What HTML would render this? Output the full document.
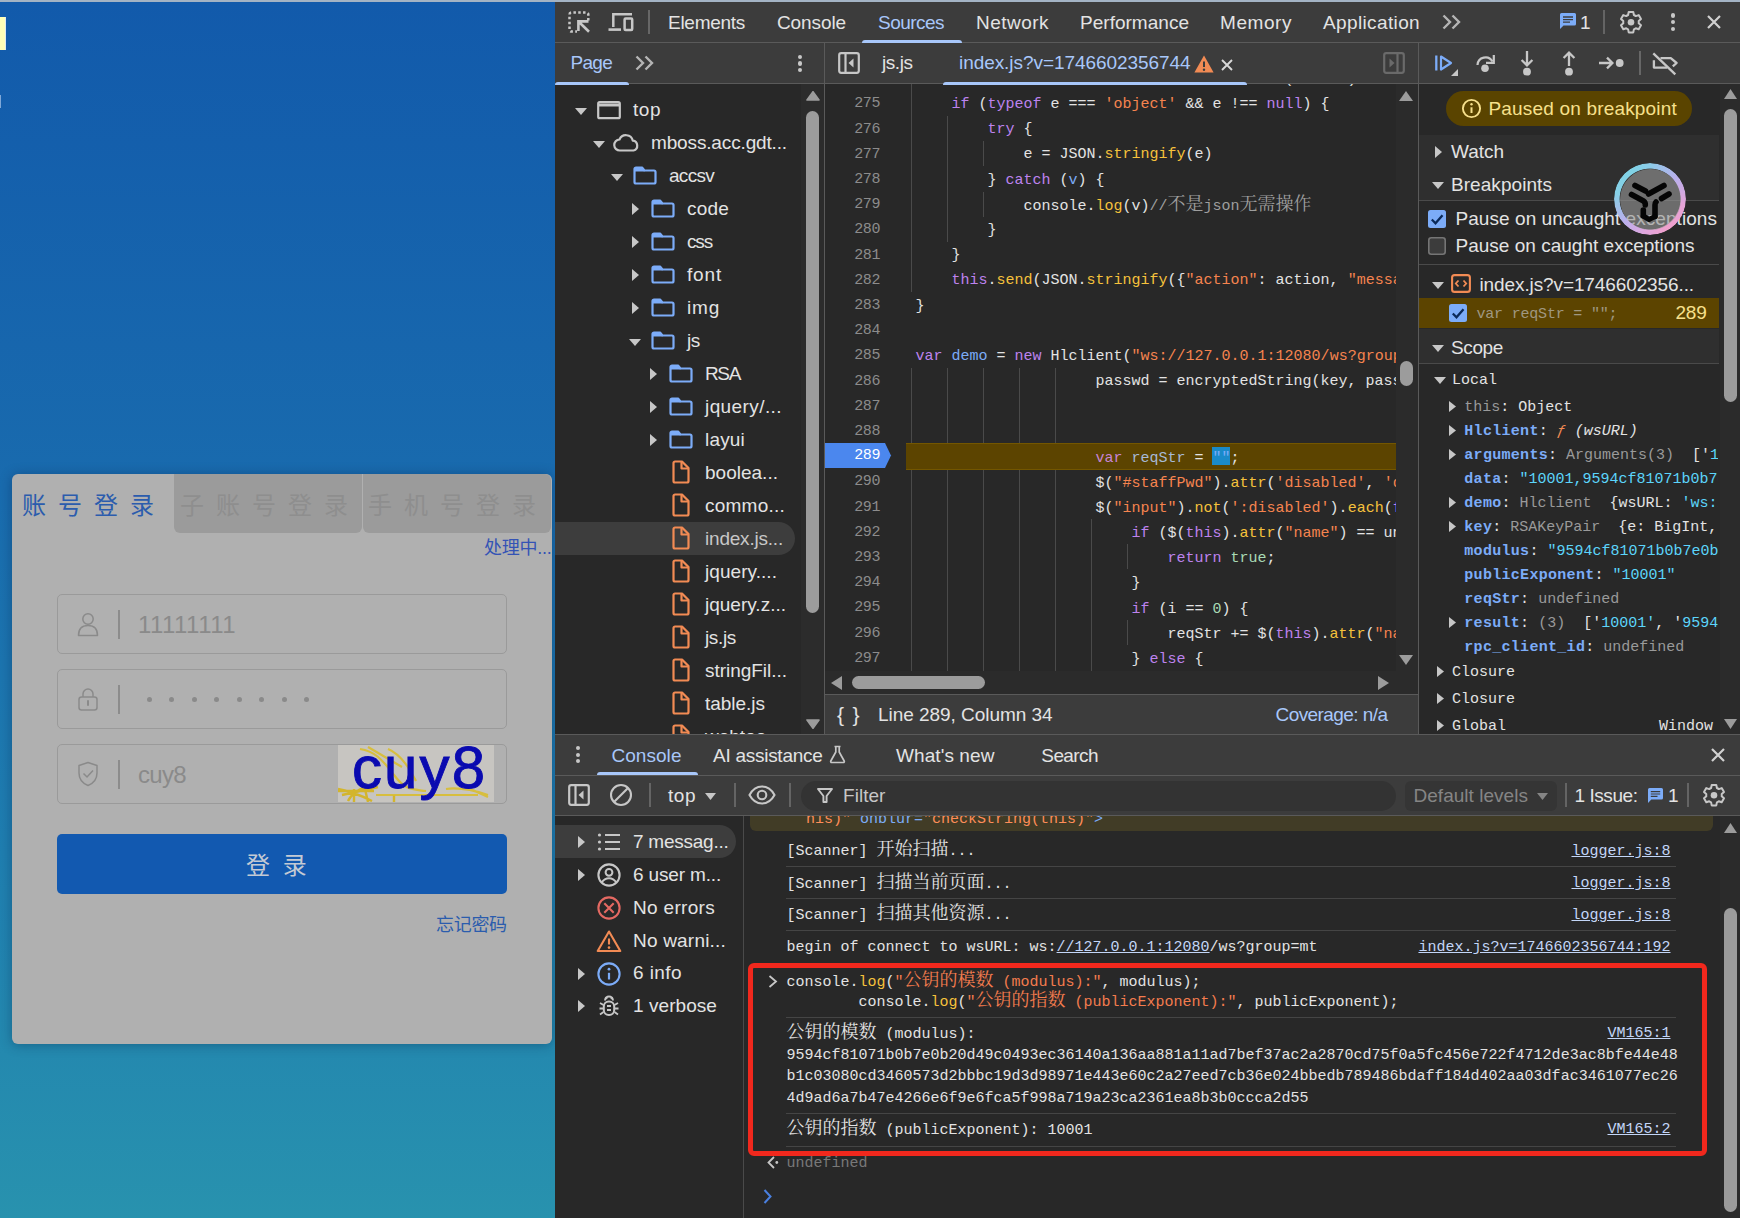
<!DOCTYPE html>
<html lang="zh-CN"><head><meta charset="utf-8"><title>DevTools</title><style>
html,body{margin:0;padding:0;}
body{width:1740px;height:1218px;overflow:hidden;position:relative;background:#282828;font-family:"Liberation Sans","Noto Sans CJK SC",sans-serif;}
#r{position:absolute;left:0;top:0;width:1740px;height:1218px;overflow:hidden;}
#r div,#r span,#r svg{position:absolute;}
#r span{white-space:pre;}
#r span span{position:static;}
.m{font-family:"Liberation Mono","Noto Serif CJK SC",monospace;}
.c{font-family:"Liberation Mono","Noto Serif CJK SC",monospace;font-size:18px;}
</style></head><body><div id="r">
<div style="left:0px;top:0px;width:555px;height:1218px;background:linear-gradient(to bottom,#125aab 0%,#196bae 40%,#1f7eb0 70%,#2892ae 100%);"></div>
<div style="left:0px;top:17px;width:5px;height:33px;background:#ffffb8;box-shadow:1px 0 0 #dfe8f0;"></div>
<div style="left:0px;top:95px;width:1px;height:13px;background:#7fa8d8;"></div>
<div style="left:12px;top:474px;width:539.5px;height:569.5px;background:#b0b0b0;border-radius:6px;box-shadow:0 1px 12px rgba(0,25,60,.35);"></div>
<div style="left:174px;top:474px;width:188px;height:59px;background:#9b9b9b;border-radius:0 0 6px 6px;"></div>
<div style="left:363px;top:474px;width:188px;height:59px;background:#9b9b9b;border-radius:0 6px 6px 6px;"></div>
<span style="left:22px;top:488.18px;font-size:24px;line-height:36px;color:#2b5cad;font-family:'Liberation Sans','Noto Sans CJK SC',sans-serif;letter-spacing:12px;">账号登录</span>
<span style="left:180px;top:488.18px;font-size:24px;line-height:36px;color:#8e8e8e;font-family:'Liberation Sans','Noto Sans CJK SC',sans-serif;letter-spacing:12px;">子账号登录</span>
<span style="left:368px;top:488.18px;font-size:24px;line-height:36px;color:#8e8e8e;font-family:'Liberation Sans','Noto Sans CJK SC',sans-serif;letter-spacing:12px;">手机号登录</span>
<span style="left:484px;top:535.26px;font-size:18px;line-height:27px;color:#3453b5;font-family:'Liberation Sans','Noto Sans CJK SC',sans-serif;letter-spacing:-0.253px;">处理中...</span>
<div style="left:57px;top:594px;width:448px;height:58px;background:transparent;border:1px solid #9a9a9a;border-radius:5px;"></div>
<div style="left:118px;top:610px;width:2px;height:29px;background:#8c8c8c;"></div>
<div style="left:57px;top:669px;width:448px;height:58px;background:transparent;border:1px solid #9a9a9a;border-radius:5px;"></div>
<div style="left:118px;top:685px;width:2px;height:29px;background:#8c8c8c;"></div>
<div style="left:57px;top:744px;width:448px;height:58px;background:transparent;border:1px solid #9a9a9a;border-radius:5px;"></div>
<div style="left:118px;top:760px;width:2px;height:29px;background:#8c8c8c;"></div>
<svg style="left:76px;top:611px;" width="24" height="26" viewBox="0 0 24 26"><circle cx="12" cy="8" r="5.2" fill="none" stroke="#8a8a8a" stroke-width="1.5"/><path d="M2.5 24.5 C2.5 17 7 14.5 12 14.5 C17 14.5 21.5 17 21.5 24.5 Z" fill="none" stroke="#8a8a8a" stroke-width="1.5" stroke-linejoin="round"/></svg>
<svg style="left:77px;top:686px;" width="22" height="26" viewBox="0 0 22 26"><path d="M6 11 V8 a5 5 0 0 1 10 0 V11" fill="none" stroke="#8a8a8a" stroke-width="1.5"/><rect x="2" y="11" width="18" height="13" rx="2.5" fill="none" stroke="#8a8a8a" stroke-width="1.5"/><path d="M11 15 v4" stroke="#8a8a8a" stroke-width="2" stroke-linecap="round"/></svg>
<svg style="left:77px;top:761px;" width="22" height="26" viewBox="0 0 22 26"><path d="M11 1.5 L20 4.5 V12 C20 18 16 22.5 11 24.5 C6 22.5 2 18 2 12 V4.5 Z" fill="none" stroke="#8a8a8a" stroke-width="1.5" stroke-linejoin="round"/><path d="M6.5 12.5 L10 16 L16 9.5" fill="none" stroke="#8a8a8a" stroke-width="1.5"/></svg>
<span style="left:138px;top:606.68px;font-size:24px;line-height:36px;color:#8a8a8a;font-family:'Liberation Sans','Noto Sans CJK SC',sans-serif;letter-spacing:0.461px;">11111111</span>
<div style="left:146.8px;top:697.2px;width:5px;height:5px;border-radius:3px;background:#8a8a8a"></div>
<div style="left:169.3px;top:697.2px;width:5px;height:5px;border-radius:3px;background:#8a8a8a"></div>
<div style="left:191.8px;top:697.2px;width:5px;height:5px;border-radius:3px;background:#8a8a8a"></div>
<div style="left:214.3px;top:697.2px;width:5px;height:5px;border-radius:3px;background:#8a8a8a"></div>
<div style="left:236.8px;top:697.2px;width:5px;height:5px;border-radius:3px;background:#8a8a8a"></div>
<div style="left:259.3px;top:697.2px;width:5px;height:5px;border-radius:3px;background:#8a8a8a"></div>
<div style="left:281.8px;top:697.2px;width:5px;height:5px;border-radius:3px;background:#8a8a8a"></div>
<div style="left:304.3px;top:697.2px;width:5px;height:5px;border-radius:3px;background:#8a8a8a"></div>
<span style="left:138px;top:757.18px;font-size:24px;line-height:36px;color:#8a8a8a;font-family:'Liberation Sans','Noto Sans CJK SC',sans-serif;letter-spacing:-0.676px;">cuy8</span>
<svg style="left:338px;top:745px" width="156" height="57" viewBox="0 0 156 57"><rect width="156" height="57" fill="#c7c5c1"/><path d="M0 44 C12 46 22 50 34 56 M4 50 L40 42 M10 56 C14 48 22 44 30 40 M0 46 H36 M16 57 V44 M30 57 L26 40 M56 57 V50" stroke="#d4b21c" stroke-width="2.4" fill="none" opacity=".9"/><path d="M22 4 C36 6 44 14 56 30 S74 44 88 46 M30 2 L64 22 M50 4 C60 8 70 20 78 36 M38 50 H140 M108 44 C122 42 138 46 150 50 M128 42 L150 52" stroke="#d8bc30" stroke-width="2.2" fill="none" opacity=".9"/><text x="14" y="42.5" font-family="Liberation Sans,sans-serif" font-size="60" fill="#0a0ab0" stroke="#0a0ab0" stroke-width="0.9" textLength="133" lengthAdjust="spacing">cuy8</text></svg>
<div style="left:57px;top:834px;width:450px;height:60px;background:#1259b0;border-radius:5px;"></div>
<span style="left:246px;top:847.68px;font-size:24px;line-height:36px;color:#c4cad4;font-family:'Liberation Sans','Noto Sans CJK SC',sans-serif;letter-spacing:3px;">登 录</span>
<span style="left:436px;top:912.26px;font-size:18px;line-height:27px;color:#2b5cad;font-family:'Liberation Sans','Noto Sans CJK SC',sans-serif;letter-spacing:-0.3px;">忘记密码</span>
<div style="left:555px;top:0px;width:1185px;height:1218px;background:#282828;"></div>
<div style="left:0px;top:0px;width:1740px;height:2px;background:#a3b3c4;"></div>
<div style="left:555px;top:2px;width:1185px;height:40px;background:#3c3c3c;"></div>
<div style="left:555px;top:42px;width:1185px;height:1px;background:#5a5a5a;"></div>
<div style="left:555px;top:43px;width:1185px;height:40px;background:#3c3c3c;"></div>
<div style="left:555px;top:83px;width:1185px;height:1px;background:#5a5a5a;"></div>
<svg style="left:567px;top:10px;" width="24" height="24" viewBox="0 0 24 24"><path d="M21.3 10.5 V4.5 a2 2 0 0 0 -2 -2 H4.5 a2 2 0 0 0 -2 2 V19.5 a2 2 0 0 0 2 2 H10" fill="none" stroke="#c7c7c7" stroke-width="2.5" stroke-dasharray="2.5 2.3"/><path d="M11.5 11.5 L22 21.8 M11.4 21 V11.4 H21.5" fill="none" stroke="#c7c7c7" stroke-width="2.6"/></svg>
<svg style="left:607px;top:11px;" width="28" height="22" viewBox="0 0 28 22"><path d="M6.3 16 V3.3 H25" fill="none" stroke="#c7c7c7" stroke-width="2.5"/><path d="M1.5 18.6 H14" stroke="#c7c7c7" stroke-width="2.6"/><rect x="17.6" y="7.6" width="7.6" height="11.4" rx="1" fill="none" stroke="#c7c7c7" stroke-width="2.5"/></svg>
<div style="left:648px;top:10px;width:2px;height:24px;background:#676767;"></div>
<span style="left:668px;top:8.92px;font-size:19px;line-height:28px;color:#e3e3e3;letter-spacing:-0.275px;">Elements</span>
<span style="left:777px;top:8.92px;font-size:19px;line-height:28px;color:#e3e3e3;letter-spacing:-0.103px;">Console</span>
<span style="left:878px;top:8.92px;font-size:19px;line-height:28px;color:#a8c7fa;letter-spacing:-0.529px;">Sources</span>
<span style="left:976px;top:8.92px;font-size:19px;line-height:28px;color:#e3e3e3;letter-spacing:0.473px;">Network</span>
<span style="left:1080px;top:8.92px;font-size:19px;line-height:28px;color:#e3e3e3;letter-spacing:0.02px;">Performance</span>
<span style="left:1220px;top:8.92px;font-size:19px;line-height:28px;color:#e3e3e3;letter-spacing:0.562px;">Memory</span>
<span style="left:1323px;top:8.92px;font-size:19px;line-height:28px;color:#e3e3e3;letter-spacing:0.368px;">Application</span>
<div style="left:862px;top:39.5px;width:100px;height:3px;background:#a8c7fa;border-radius:3px 3px 0 0;"></div>
<svg style="left:1442px;top:14px;" width="19" height="16" viewBox="0 0 19 16"><path d="M1.5 1.5 L8 8 L1.5 14.5 M10.5 1.5 L17 8 L10.5 14.5" fill="none" stroke="#b4b4b4" stroke-width="2.4"/></svg>
<svg style="left:1560px;top:13px;" width="16" height="16" viewBox="0 0 16 16"><path d="M0 1.5 a1.5 1.5 0 0 1 1.5 -1.5 H14.5 a1.5 1.5 0 0 1 1.5 1.5 V11 a1.5 1.5 0 0 1 -1.5 1.5 H3.5 L0 16 Z" fill="#7cacf8"/><path d="M3 4 H13 M3 6.6 H13 M3 9.2 H10" stroke="#3c3c3c" stroke-width="1.3"/></svg>
<span style="left:1580px;top:8.72px;font-size:19px;line-height:28px;color:#e3e3e3;">1</span>
<div style="left:1602.5px;top:10px;width:2px;height:24px;background:#646464;"></div>
<svg style="left:1619px;top:10px;" width="24" height="24" viewBox="0 0 24 24"><path fill="none" stroke="#c7c7c7" stroke-width="2" stroke-linejoin="round" d="M9.7 2 h4.6 l.6 3 a7.5 7.5 0 0 1 1.9 1.1 l2.9 -1 2.3 4 -2.3 2 a7.5 7.5 0 0 1 0 2.2 l2.3 2 -2.3 4 -2.9 -1 a7.5 7.5 0 0 1 -1.9 1.1 l-.6 3 h-4.6 l-.6 -3 a7.5 7.5 0 0 1 -1.9 -1.1 l-2.9 1 -2.3 -4 2.3 -2 a7.5 7.5 0 0 1 0 -2.2 l-2.3 -2 2.3 -4 2.9 1 a7.5 7.5 0 0 1 1.9 -1.1 z"/><circle cx="12" cy="12.2" r="3.3" fill="#c7c7c7"/></svg>
<div style="left:1670.8px;top:13.4px;width:4.4px;height:4.4px;border-radius:50%;background:#c7c7c7"></div>
<div style="left:1670.8px;top:20.1px;width:4.4px;height:4.4px;border-radius:50%;background:#c7c7c7"></div>
<div style="left:1670.8px;top:26.8px;width:4.4px;height:4.4px;border-radius:50%;background:#c7c7c7"></div>
<svg style="left:1707px;top:15px;" width="14" height="14" viewBox="0 0 14 14"><path d="M1 1 L13 13 M13 1 L1 13" stroke="#d0d0d0" stroke-width="2.2"/></svg>
<span style="left:570.5px;top:49.42px;font-size:19px;line-height:28px;color:#a8c7fa;letter-spacing:-0.719px;">Page</span>
<div style="left:555px;top:81.5px;width:74px;height:3px;background:#a8c7fa;border-radius:3px 3px 0 0;"></div>
<svg style="left:635px;top:55px;" width="19" height="16" viewBox="0 0 19 16"><path d="M1.5 1.5 L8 8 L1.5 14.5 M10.5 1.5 L17 8 L10.5 14.5" fill="none" stroke="#b4b4b4" stroke-width="2.4"/></svg>
<div style="left:797.9px;top:54.9px;width:4.2px;height:4.2px;border-radius:50%;background:#c7c7c7"></div>
<div style="left:797.9px;top:61.4px;width:4.2px;height:4.2px;border-radius:50%;background:#c7c7c7"></div>
<div style="left:797.9px;top:67.9px;width:4.2px;height:4.2px;border-radius:50%;background:#c7c7c7"></div>
<div style="left:824px;top:43px;width:1px;height:691px;background:#5a5a5a;"></div>
<svg style="left:838px;top:52px;" width="22" height="22" viewBox="0 0 22 22"><rect x="1.2" y="1.2" width="19.6" height="19.6" rx="2" fill="none" stroke="#c7c7c7" stroke-width="2.2"/><path d="M7.5 1 V21" stroke="#c7c7c7" stroke-width="2.2"/><path d="M15.5 6.5 L10.5 11 L15.5 15.5 Z" fill="#c7c7c7"/></svg>
<span style="left:882px;top:49.42px;font-size:19px;line-height:28px;color:#e3e3e3;letter-spacing:-0.447px;">js.js</span>
<span style="left:959px;top:49.42px;font-size:19px;line-height:28px;color:#a8c7fa;letter-spacing:-0.061px;">index.js?v=1746602356744</span>
<svg style="left:1194px;top:55px;" width="20" height="18" viewBox="0 0 20 18"><path d="M10 0.5 L19.6 17.5 H0.4 Z" fill="#f28b54"/><path d="M10 6.5 V12" stroke="#3c3c3c" stroke-width="2"/><circle cx="10" cy="14.7" r="1.2" fill="#3c3c3c"/></svg>
<svg style="left:1220.5px;top:58.5px;" width="12" height="12" viewBox="0 0 12 12"><path d="M1 1 L11 11 M11 1 L1 11" stroke="#d8d8d8" stroke-width="1.9"/></svg>
<div style="left:943px;top:81.5px;width:304px;height:3px;background:#a8c7fa;border-radius:3px 3px 0 0;"></div>
<svg style="left:1383px;top:52px;" width="22" height="22" viewBox="0 0 22 22"><rect x="1.2" y="1.2" width="19.6" height="19.6" rx="2" fill="none" stroke="#6a6a6a" stroke-width="2.2"/><path d="M14.5 1 V21" stroke="#6a6a6a" stroke-width="2.2"/><path d="M6.5 6.5 L11.5 11 L6.5 15.5 Z" fill="#6a6a6a"/></svg>
<div style="left:1418px;top:43px;width:1px;height:691px;background:#5a5a5a;"></div>
<svg style="left:1434px;top:54px;" width="26" height="24" viewBox="0 0 26 24"><path d="M2.3 1.5 V16.5" stroke="#7cacf8" stroke-width="2.3"/><path d="M7 2.5 L17 9 L7 15.5 Z" fill="none" stroke="#7cacf8" stroke-width="2.2" stroke-linejoin="round"/><path d="M24 15 V22 H17 Z" fill="#c7c7c7"/></svg>
<svg style="left:1475px;top:53px;" width="22" height="22" viewBox="0 0 22 22"><path d="M2.5 12 A8 8 0 0 1 17.5 8.5" fill="none" stroke="#c7c7c7" stroke-width="2.2"/><path d="M18.8 2 V9.8 H11" fill="none" stroke="#c7c7c7" stroke-width="2.2"/><circle cx="10" cy="15.3" r="3.8" fill="#c7c7c7"/></svg>
<svg style="left:1517px;top:50px;" width="20" height="27" viewBox="0 0 20 27"><path d="M10 1 V15 M4.6 10 L10 15.4 L15.4 10" fill="none" stroke="#c7c7c7" stroke-width="2.3"/><circle cx="10" cy="21.7" r="3.9" fill="#c7c7c7"/></svg>
<svg style="left:1559px;top:50px;" width="20" height="27" viewBox="0 0 20 27"><path d="M10 16 V2.6 M4.6 8 L10 2.6 L15.4 8" fill="none" stroke="#c7c7c7" stroke-width="2.3"/><circle cx="10" cy="21.7" r="3.9" fill="#c7c7c7"/></svg>
<svg style="left:1598px;top:54px;" width="28" height="18" viewBox="0 0 28 18"><path d="M1 9 H14 M9 3.6 L14.4 9 L9 14.4" fill="none" stroke="#c7c7c7" stroke-width="2.3"/><circle cx="21.7" cy="9" r="3.9" fill="#c7c7c7"/></svg>
<div style="left:1638.5px;top:51px;width:2px;height:24px;background:#676767;"></div>
<svg style="left:1651px;top:51px;" width="28" height="25" viewBox="0 0 28 25"><path d="M9.5 7.2 H19.8 L25.6 12 L21.8 15.4 M16.2 16.6 H2.9 V9.2" fill="none" stroke="#c7c7c7" stroke-width="2.3" stroke-linejoin="round"/><path d="M2.3 2.3 L24.3 23.3" stroke="#c7c7c7" stroke-width="2.3"/></svg>
<div style="left:555px;top:522px;width:240px;height:33px;background:#3d3d3d;border-radius:0 17px 17px 0;"></div>
<svg style="left:575px;top:108.0px;" width="12" height="7" viewBox="0 0 12 7"><path d="M0 0 H12 L6 7 Z" fill="#c7c7c7"/></svg>
<svg style="left:597px;top:101.0px;" width="24" height="19" viewBox="0 0 24 19"><rect x="1.2" y="1.2" width="21.6" height="16" rx="1.5" fill="none" stroke="#c7c7c7" stroke-width="2.2"/><path d="M1 4 H23" stroke="#c7c7c7" stroke-width="3"/></svg>
<span style="left:633px;top:95.72px;font-size:19px;line-height:28px;color:#e3e3e3;letter-spacing:0.526px;">top</span>
<svg style="left:593px;top:141.0px;" width="12" height="7" viewBox="0 0 12 7"><path d="M0 0 H12 L6 7 Z" fill="#c7c7c7"/></svg>
<svg style="left:613px;top:132.0px;" width="28" height="20" viewBox="0 0 28 20"><path d="M7 18.5 a5.5 5.5 0 0 1 -.5 -11 a7 7 0 0 1 13.3 1.2 a5 5 0 0 1 .7 9.8 Z" fill="none" stroke="#c7c7c7" stroke-width="2.2" stroke-linejoin="round"/></svg>
<span style="left:651px;top:128.72px;font-size:19px;line-height:28px;color:#e3e3e3;letter-spacing:-0.146px;">mboss.acc.gdt...</span>
<svg style="left:611px;top:174.0px;" width="12" height="7" viewBox="0 0 12 7"><path d="M0 0 H12 L6 7 Z" fill="#c7c7c7"/></svg>
<svg style="left:633px;top:166.0px;" width="24" height="19" viewBox="0 0 24 19"><path d="M1.5 3 a1.5 1.5 0 0 1 1.5 -1.5 H9 L11.5 4.5 H21 a1.5 1.5 0 0 1 1.5 1.5 V16 a1.5 1.5 0 0 1 -1.5 1.5 H3 a1.5 1.5 0 0 1 -1.5 -1.5 Z" fill="none" stroke="#7cacf8" stroke-width="2.2" stroke-linejoin="round"/><path d="M1.5 5.5 V2.8 a1.3 1.3 0 0 1 1.3 -1.3 H9 L11.5 4.5 V5.5 Z" fill="#7cacf8"/></svg>
<span style="left:669px;top:161.72px;font-size:19px;line-height:28px;color:#e3e3e3;letter-spacing:-0.716px;">accsv</span>
<svg style="left:632px;top:203.0px;" width="7" height="12" viewBox="0 0 7 12"><path d="M0 0 V12 L7 6 Z" fill="#c7c7c7"/></svg>
<svg style="left:651px;top:199.0px;" width="24" height="19" viewBox="0 0 24 19"><path d="M1.5 3 a1.5 1.5 0 0 1 1.5 -1.5 H9 L11.5 4.5 H21 a1.5 1.5 0 0 1 1.5 1.5 V16 a1.5 1.5 0 0 1 -1.5 1.5 H3 a1.5 1.5 0 0 1 -1.5 -1.5 Z" fill="none" stroke="#7cacf8" stroke-width="2.2" stroke-linejoin="round"/><path d="M1.5 5.5 V2.8 a1.3 1.3 0 0 1 1.3 -1.3 H9 L11.5 4.5 V5.5 Z" fill="#7cacf8"/></svg>
<span style="left:687px;top:194.72px;font-size:19px;line-height:28px;color:#e3e3e3;letter-spacing:0.199px;">code</span>
<svg style="left:632px;top:236.0px;" width="7" height="12" viewBox="0 0 7 12"><path d="M0 0 V12 L7 6 Z" fill="#c7c7c7"/></svg>
<svg style="left:651px;top:232.0px;" width="24" height="19" viewBox="0 0 24 19"><path d="M1.5 3 a1.5 1.5 0 0 1 1.5 -1.5 H9 L11.5 4.5 H21 a1.5 1.5 0 0 1 1.5 1.5 V16 a1.5 1.5 0 0 1 -1.5 1.5 H3 a1.5 1.5 0 0 1 -1.5 -1.5 Z" fill="none" stroke="#7cacf8" stroke-width="2.2" stroke-linejoin="round"/><path d="M1.5 5.5 V2.8 a1.3 1.3 0 0 1 1.3 -1.3 H9 L11.5 4.5 V5.5 Z" fill="#7cacf8"/></svg>
<span style="left:687px;top:227.72px;font-size:19px;line-height:28px;color:#e3e3e3;letter-spacing:-1.167px;">css</span>
<svg style="left:632px;top:269.0px;" width="7" height="12" viewBox="0 0 7 12"><path d="M0 0 V12 L7 6 Z" fill="#c7c7c7"/></svg>
<svg style="left:651px;top:265.0px;" width="24" height="19" viewBox="0 0 24 19"><path d="M1.5 3 a1.5 1.5 0 0 1 1.5 -1.5 H9 L11.5 4.5 H21 a1.5 1.5 0 0 1 1.5 1.5 V16 a1.5 1.5 0 0 1 -1.5 1.5 H3 a1.5 1.5 0 0 1 -1.5 -1.5 Z" fill="none" stroke="#7cacf8" stroke-width="2.2" stroke-linejoin="round"/><path d="M1.5 5.5 V2.8 a1.3 1.3 0 0 1 1.3 -1.3 H9 L11.5 4.5 V5.5 Z" fill="#7cacf8"/></svg>
<span style="left:687px;top:260.72px;font-size:19px;line-height:28px;color:#e3e3e3;letter-spacing:0.824px;">font</span>
<svg style="left:632px;top:302.0px;" width="7" height="12" viewBox="0 0 7 12"><path d="M0 0 V12 L7 6 Z" fill="#c7c7c7"/></svg>
<svg style="left:651px;top:298.0px;" width="24" height="19" viewBox="0 0 24 19"><path d="M1.5 3 a1.5 1.5 0 0 1 1.5 -1.5 H9 L11.5 4.5 H21 a1.5 1.5 0 0 1 1.5 1.5 V16 a1.5 1.5 0 0 1 -1.5 1.5 H3 a1.5 1.5 0 0 1 -1.5 -1.5 Z" fill="none" stroke="#7cacf8" stroke-width="2.2" stroke-linejoin="round"/><path d="M1.5 5.5 V2.8 a1.3 1.3 0 0 1 1.3 -1.3 H9 L11.5 4.5 V5.5 Z" fill="#7cacf8"/></svg>
<span style="left:687px;top:293.72px;font-size:19px;line-height:28px;color:#e3e3e3;letter-spacing:0.792px;">img</span>
<svg style="left:629px;top:339.0px;" width="12" height="7" viewBox="0 0 12 7"><path d="M0 0 H12 L6 7 Z" fill="#c7c7c7"/></svg>
<svg style="left:651px;top:331.0px;" width="24" height="19" viewBox="0 0 24 19"><path d="M1.5 3 a1.5 1.5 0 0 1 1.5 -1.5 H9 L11.5 4.5 H21 a1.5 1.5 0 0 1 1.5 1.5 V16 a1.5 1.5 0 0 1 -1.5 1.5 H3 a1.5 1.5 0 0 1 -1.5 -1.5 Z" fill="none" stroke="#7cacf8" stroke-width="2.2" stroke-linejoin="round"/><path d="M1.5 5.5 V2.8 a1.3 1.3 0 0 1 1.3 -1.3 H9 L11.5 4.5 V5.5 Z" fill="#7cacf8"/></svg>
<span style="left:687px;top:326.72px;font-size:19px;line-height:28px;color:#e3e3e3;letter-spacing:-0.367px;">js</span>
<svg style="left:650px;top:368.0px;" width="7" height="12" viewBox="0 0 7 12"><path d="M0 0 V12 L7 6 Z" fill="#c7c7c7"/></svg>
<svg style="left:669px;top:364.0px;" width="24" height="19" viewBox="0 0 24 19"><path d="M1.5 3 a1.5 1.5 0 0 1 1.5 -1.5 H9 L11.5 4.5 H21 a1.5 1.5 0 0 1 1.5 1.5 V16 a1.5 1.5 0 0 1 -1.5 1.5 H3 a1.5 1.5 0 0 1 -1.5 -1.5 Z" fill="none" stroke="#7cacf8" stroke-width="2.2" stroke-linejoin="round"/><path d="M1.5 5.5 V2.8 a1.3 1.3 0 0 1 1.3 -1.3 H9 L11.5 4.5 V5.5 Z" fill="#7cacf8"/></svg>
<span style="left:705px;top:359.72px;font-size:19px;line-height:28px;color:#e3e3e3;letter-spacing:-1.359px;">RSA</span>
<svg style="left:650px;top:401.0px;" width="7" height="12" viewBox="0 0 7 12"><path d="M0 0 V12 L7 6 Z" fill="#c7c7c7"/></svg>
<svg style="left:669px;top:397.0px;" width="24" height="19" viewBox="0 0 24 19"><path d="M1.5 3 a1.5 1.5 0 0 1 1.5 -1.5 H9 L11.5 4.5 H21 a1.5 1.5 0 0 1 1.5 1.5 V16 a1.5 1.5 0 0 1 -1.5 1.5 H3 a1.5 1.5 0 0 1 -1.5 -1.5 Z" fill="none" stroke="#7cacf8" stroke-width="2.2" stroke-linejoin="round"/><path d="M1.5 5.5 V2.8 a1.3 1.3 0 0 1 1.3 -1.3 H9 L11.5 4.5 V5.5 Z" fill="#7cacf8"/></svg>
<span style="left:705px;top:392.72px;font-size:19px;line-height:28px;color:#e3e3e3;letter-spacing:0.412px;">jquery/...</span>
<svg style="left:650px;top:434.0px;" width="7" height="12" viewBox="0 0 7 12"><path d="M0 0 V12 L7 6 Z" fill="#c7c7c7"/></svg>
<svg style="left:669px;top:430.0px;" width="24" height="19" viewBox="0 0 24 19"><path d="M1.5 3 a1.5 1.5 0 0 1 1.5 -1.5 H9 L11.5 4.5 H21 a1.5 1.5 0 0 1 1.5 1.5 V16 a1.5 1.5 0 0 1 -1.5 1.5 H3 a1.5 1.5 0 0 1 -1.5 -1.5 Z" fill="none" stroke="#7cacf8" stroke-width="2.2" stroke-linejoin="round"/><path d="M1.5 5.5 V2.8 a1.3 1.3 0 0 1 1.3 -1.3 H9 L11.5 4.5 V5.5 Z" fill="#7cacf8"/></svg>
<span style="left:705px;top:425.72px;font-size:19px;line-height:28px;color:#e3e3e3;letter-spacing:0.184px;">layui</span>
<svg style="left:672px;top:460.0px;" width="18" height="24" viewBox="0 0 18 24"><path d="M1.5 3 a1.5 1.5 0 0 1 1.5 -1.5 H10 L16.5 8 V21 a1.5 1.5 0 0 1 -1.5 1.5 H3 a1.5 1.5 0 0 1 -1.5 -1.5 Z" fill="none" stroke="#f28b54" stroke-width="2.2" stroke-linejoin="round"/><path d="M9.5 1.5 V8.5 H16.5" fill="none" stroke="#f28b54" stroke-width="2.2" stroke-linejoin="round"/></svg>
<span style="left:705px;top:458.72px;font-size:19px;line-height:28px;color:#e3e3e3;letter-spacing:0.01px;">boolea...</span>
<svg style="left:672px;top:492.99999999999994px;" width="18" height="24" viewBox="0 0 18 24"><path d="M1.5 3 a1.5 1.5 0 0 1 1.5 -1.5 H10 L16.5 8 V21 a1.5 1.5 0 0 1 -1.5 1.5 H3 a1.5 1.5 0 0 1 -1.5 -1.5 Z" fill="none" stroke="#f28b54" stroke-width="2.2" stroke-linejoin="round"/><path d="M9.5 1.5 V8.5 H16.5" fill="none" stroke="#f28b54" stroke-width="2.2" stroke-linejoin="round"/></svg>
<span style="left:705px;top:491.72px;font-size:19px;line-height:28px;color:#e3e3e3;letter-spacing:0.234px;">commo...</span>
<svg style="left:672px;top:526.0px;" width="18" height="24" viewBox="0 0 18 24"><path d="M1.5 3 a1.5 1.5 0 0 1 1.5 -1.5 H10 L16.5 8 V21 a1.5 1.5 0 0 1 -1.5 1.5 H3 a1.5 1.5 0 0 1 -1.5 -1.5 Z" fill="none" stroke="#f28b54" stroke-width="2.2" stroke-linejoin="round"/><path d="M9.5 1.5 V8.5 H16.5" fill="none" stroke="#f28b54" stroke-width="2.2" stroke-linejoin="round"/></svg>
<span style="left:705px;top:524.72px;font-size:19px;line-height:28px;color:#c7c7c7;letter-spacing:-0.206px;">index.js...</span>
<svg style="left:672px;top:559.0px;" width="18" height="24" viewBox="0 0 18 24"><path d="M1.5 3 a1.5 1.5 0 0 1 1.5 -1.5 H10 L16.5 8 V21 a1.5 1.5 0 0 1 -1.5 1.5 H3 a1.5 1.5 0 0 1 -1.5 -1.5 Z" fill="none" stroke="#f28b54" stroke-width="2.2" stroke-linejoin="round"/><path d="M9.5 1.5 V8.5 H16.5" fill="none" stroke="#f28b54" stroke-width="2.2" stroke-linejoin="round"/></svg>
<span style="left:705px;top:557.72px;font-size:19px;line-height:28px;color:#e3e3e3;letter-spacing:0.053px;">jquery....</span>
<svg style="left:672px;top:592.0px;" width="18" height="24" viewBox="0 0 18 24"><path d="M1.5 3 a1.5 1.5 0 0 1 1.5 -1.5 H10 L16.5 8 V21 a1.5 1.5 0 0 1 -1.5 1.5 H3 a1.5 1.5 0 0 1 -1.5 -1.5 Z" fill="none" stroke="#f28b54" stroke-width="2.2" stroke-linejoin="round"/><path d="M9.5 1.5 V8.5 H16.5" fill="none" stroke="#f28b54" stroke-width="2.2" stroke-linejoin="round"/></svg>
<span style="left:705px;top:590.72px;font-size:19px;line-height:28px;color:#e3e3e3;letter-spacing:0.003px;">jquery.z...</span>
<svg style="left:672px;top:625.0px;" width="18" height="24" viewBox="0 0 18 24"><path d="M1.5 3 a1.5 1.5 0 0 1 1.5 -1.5 H10 L16.5 8 V21 a1.5 1.5 0 0 1 -1.5 1.5 H3 a1.5 1.5 0 0 1 -1.5 -1.5 Z" fill="none" stroke="#f28b54" stroke-width="2.2" stroke-linejoin="round"/><path d="M9.5 1.5 V8.5 H16.5" fill="none" stroke="#f28b54" stroke-width="2.2" stroke-linejoin="round"/></svg>
<span style="left:705px;top:623.72px;font-size:19px;line-height:28px;color:#e3e3e3;letter-spacing:-0.347px;">js.js</span>
<svg style="left:672px;top:658.0px;" width="18" height="24" viewBox="0 0 18 24"><path d="M1.5 3 a1.5 1.5 0 0 1 1.5 -1.5 H10 L16.5 8 V21 a1.5 1.5 0 0 1 -1.5 1.5 H3 a1.5 1.5 0 0 1 -1.5 -1.5 Z" fill="none" stroke="#f28b54" stroke-width="2.2" stroke-linejoin="round"/><path d="M9.5 1.5 V8.5 H16.5" fill="none" stroke="#f28b54" stroke-width="2.2" stroke-linejoin="round"/></svg>
<span style="left:705px;top:656.72px;font-size:19px;line-height:28px;color:#e3e3e3;letter-spacing:-0.03px;">stringFil...</span>
<svg style="left:672px;top:691.0px;" width="18" height="24" viewBox="0 0 18 24"><path d="M1.5 3 a1.5 1.5 0 0 1 1.5 -1.5 H10 L16.5 8 V21 a1.5 1.5 0 0 1 -1.5 1.5 H3 a1.5 1.5 0 0 1 -1.5 -1.5 Z" fill="none" stroke="#f28b54" stroke-width="2.2" stroke-linejoin="round"/><path d="M9.5 1.5 V8.5 H16.5" fill="none" stroke="#f28b54" stroke-width="2.2" stroke-linejoin="round"/></svg>
<span style="left:705px;top:689.72px;font-size:19px;line-height:28px;color:#e3e3e3;letter-spacing:-0.025px;">table.js</span>
<svg style="left:672px;top:724.0px;" width="18" height="24" viewBox="0 0 18 24"><path d="M1.5 3 a1.5 1.5 0 0 1 1.5 -1.5 H10 L16.5 8 V21 a1.5 1.5 0 0 1 -1.5 1.5 H3 a1.5 1.5 0 0 1 -1.5 -1.5 Z" fill="none" stroke="#f28b54" stroke-width="2.2" stroke-linejoin="round"/><path d="M9.5 1.5 V8.5 H16.5" fill="none" stroke="#f28b54" stroke-width="2.2" stroke-linejoin="round"/></svg>
<span style="left:705px;top:722.72px;font-size:19px;line-height:28px;color:#e3e3e3;">webtoo</span>
<div style="left:555px;top:734px;width:269px;height:2px;background:#282828;"></div>
<div style="left:801px;top:84px;width:23px;height:650px;background:#2c2c2c;"></div>
<svg style="left:805.5px;top:91px;" width="14" height="10" viewBox="0 0 14 10"><path d="M1 9 H13 L7 0.7 Z" fill="#9c9c9c" stroke="#9c9c9c" stroke-width="1.6" stroke-linejoin="round"/></svg>
<svg style="left:805.5px;top:719px;" width="14" height="10" viewBox="0 0 14 10"><path d="M1 1 H13 L7 9.3 Z" fill="#9c9c9c" stroke="#9c9c9c" stroke-width="1.6" stroke-linejoin="round"/></svg>
<div style="left:806px;top:111px;width:13px;height:502px;background:#9c9c9c;border-radius:7px;"></div>
<div style="left:825px;top:84px;width:571px;height:587px;overflow:hidden;">
<div style="left:86px;top:0.0px;width:1px;height:208.3px;background:#4a4a4a"></div>
<div style="left:122px;top:31.9px;width:1px;height:126.0px;background:#4a4a4a"></div>
<div style="left:158px;top:57.1px;width:1px;height:25.2px;background:#4a4a4a"></div>
<div style="left:158px;top:107.5px;width:1px;height:25.2px;background:#4a4a4a"></div>
<div style="left:86px;top:283.9px;width:1px;height:303.1px;background:#4a4a4a"></div>
<div style="left:122px;top:283.9px;width:1px;height:303.1px;background:#4a4a4a"></div>
<div style="left:158px;top:283.9px;width:1px;height:303.1px;background:#4a4a4a"></div>
<div style="left:194px;top:283.9px;width:1px;height:303.1px;background:#4a4a4a"></div>
<div style="left:230px;top:283.9px;width:1px;height:303.1px;background:#4a4a4a"></div>
<div style="left:266px;top:435.1px;width:1px;height:151.9px;background:#4a4a4a"></div>
<div style="left:302px;top:460.3px;width:1px;height:25.2px;background:#4a4a4a"></div>
<div style="left:302px;top:535.9px;width:1px;height:25.2px;background:#4a4a4a"></div>
<div style="left:81px;top:358.6px;width:490px;height:27.4px;background:#5c4400;border-top:1px solid #735600;border-bottom:1px solid #735600;box-sizing:border-box"></div>
<div style="left:387px;top:363px;width:18px;height:17.5px;background:#1a8ac9"></div>
<svg style="left:0;top:358.6px" width="67" height="25" viewBox="0 0 67 25"><path d="M0 0 H60 L66 12.5 L60 25 H0 Z" fill="#4b87ee"/></svg>
<span class="m" style="right:516px;top:-15.89px;font-size:15px;line-height:22px;color:#8c8c8c;letter-spacing:-0.4px">274</span>
<span class="m" style="left:459.5px;top:-15.19px;font-size:15px;line-height:22px;color:#e3e3e3"><span style="color:#e3e3e3">(      )</span></span>
<span class="m" style="right:516px;top:9.31px;font-size:15px;line-height:22px;color:#8c8c8c;letter-spacing:-0.4px">275</span>
<span class="m" style="left:126.5px;top:10.01px;font-size:15px;line-height:22px;color:#e3e3e3"><span style="color:#bd83ee">if</span><span style="color:#e3e3e3"> (</span><span style="color:#bd83ee">typeof</span><span style="color:#e3e3e3"> e === </span><span style="color:#f6844f">'object'</span><span style="color:#e3e3e3"> &amp;&amp; e !== </span><span style="color:#bd83ee">null</span><span style="color:#e3e3e3">) {</span></span>
<span class="m" style="right:516px;top:34.51px;font-size:15px;line-height:22px;color:#8c8c8c;letter-spacing:-0.4px">276</span>
<span class="m" style="left:162.5px;top:35.21px;font-size:15px;line-height:22px;color:#e3e3e3"><span style="color:#bd83ee">try</span><span style="color:#e3e3e3"> {</span></span>
<span class="m" style="right:516px;top:59.71px;font-size:15px;line-height:22px;color:#8c8c8c;letter-spacing:-0.4px">277</span>
<span class="m" style="left:198.5px;top:60.41px;font-size:15px;line-height:22px;color:#e3e3e3"><span style="color:#e3e3e3">e = JSON.</span><span style="color:#f6c23c">stringify</span><span style="color:#e3e3e3">(e)</span></span>
<span class="m" style="right:516px;top:84.91px;font-size:15px;line-height:22px;color:#8c8c8c;letter-spacing:-0.4px">278</span>
<span class="m" style="left:162.5px;top:85.61px;font-size:15px;line-height:22px;color:#e3e3e3"><span style="color:#e3e3e3">} </span><span style="color:#bd83ee">catch</span><span style="color:#e3e3e3"> (</span><span style="color:#7cacf8">v</span><span style="color:#e3e3e3">) {</span></span>
<span class="m" style="right:516px;top:110.11px;font-size:15px;line-height:22px;color:#8c8c8c;letter-spacing:-0.4px">279</span>
<span class="m" style="left:198.5px;top:110.01px;font-size:15px;line-height:22px;color:#e3e3e3"><span style="color:#e3e3e3">console.</span><span style="color:#f6c23c">log</span><span style="color:#e3e3e3">(v)</span><span style="color:#9e9e9e">//<span class="c">不是</span>json<span class="c">无需操作</span></span></span>
<span class="m" style="right:516px;top:135.31px;font-size:15px;line-height:22px;color:#8c8c8c;letter-spacing:-0.4px">280</span>
<span class="m" style="left:162.5px;top:136.01px;font-size:15px;line-height:22px;color:#e3e3e3"><span style="color:#e3e3e3">}</span></span>
<span class="m" style="right:516px;top:160.51px;font-size:15px;line-height:22px;color:#8c8c8c;letter-spacing:-0.4px">281</span>
<span class="m" style="left:126.5px;top:161.21px;font-size:15px;line-height:22px;color:#e3e3e3"><span style="color:#e3e3e3">}</span></span>
<span class="m" style="right:516px;top:185.71px;font-size:15px;line-height:22px;color:#8c8c8c;letter-spacing:-0.4px">282</span>
<span class="m" style="left:126.5px;top:186.41px;font-size:15px;line-height:22px;color:#e3e3e3"><span style="color:#bd83ee">this</span><span style="color:#e3e3e3">.</span><span style="color:#f6c23c">send</span><span style="color:#e3e3e3">(JSON.</span><span style="color:#f6c23c">stringify</span><span style="color:#e3e3e3">({</span><span style="color:#f6844f">"action"</span><span style="color:#e3e3e3">: action, </span><span style="color:#f6844f">"message": e</span></span>
<span class="m" style="right:516px;top:210.91px;font-size:15px;line-height:22px;color:#8c8c8c;letter-spacing:-0.4px">283</span>
<span class="m" style="left:90.5px;top:211.61px;font-size:15px;line-height:22px;color:#e3e3e3"><span style="color:#e3e3e3">}</span></span>
<span class="m" style="right:516px;top:236.11px;font-size:15px;line-height:22px;color:#8c8c8c;letter-spacing:-0.4px">284</span>
<span class="m" style="right:516px;top:261.31px;font-size:15px;line-height:22px;color:#8c8c8c;letter-spacing:-0.4px">285</span>
<span class="m" style="left:90.5px;top:262.01px;font-size:15px;line-height:22px;color:#e3e3e3"><span style="color:#bd83ee">var</span><span style="color:#e3e3e3"> </span><span style="color:#7cacf8">demo</span><span style="color:#e3e3e3"> = </span><span style="color:#bd83ee">new</span><span style="color:#e3e3e3"> Hlclient(</span><span style="color:#f6844f">"ws://127.0.0.1:12080/ws?group=mt"</span></span>
<span class="m" style="right:516px;top:286.51px;font-size:15px;line-height:22px;color:#8c8c8c;letter-spacing:-0.4px">286</span>
<span class="m" style="left:270.5px;top:287.21px;font-size:15px;line-height:22px;color:#e3e3e3"><span style="color:#e3e3e3">passwd = encryptedString(key, passwd)</span></span>
<span class="m" style="right:516px;top:311.71px;font-size:15px;line-height:22px;color:#8c8c8c;letter-spacing:-0.4px">287</span>
<span class="m" style="right:516px;top:336.91px;font-size:15px;line-height:22px;color:#8c8c8c;letter-spacing:-0.4px">288</span>
<span class="m" style="right:516px;top:360.61px;font-size:15px;line-height:22px;color:#ffffff;letter-spacing:-0.4px">289</span>
<span class="m" style="left:270.5px;top:363.61px;font-size:15px;line-height:22px;color:#e3e3e3"><span style="color:#c685d6">var</span><span style="color:#a7bad6"> reqStr</span><span style="color:#e3e3e3"> = </span><span style="color:#7cacf8">""</span><span style="color:#e3e3e3">;</span></span>
<span class="m" style="right:516px;top:387.31px;font-size:15px;line-height:22px;color:#8c8c8c;letter-spacing:-0.4px">290</span>
<span class="m" style="left:270.5px;top:388.61px;font-size:15px;line-height:22px;color:#e3e3e3"><span style="color:#e3e3e3">$(</span><span style="color:#f6844f">"#staffPwd"</span><span style="color:#e3e3e3">).</span><span style="color:#f6c23c">attr</span><span style="color:#e3e3e3">(</span><span style="color:#f6844f">'disabled'</span><span style="color:#e3e3e3">, </span><span style="color:#f6844f">'disabled'</span></span>
<span class="m" style="right:516px;top:412.51px;font-size:15px;line-height:22px;color:#8c8c8c;letter-spacing:-0.4px">291</span>
<span class="m" style="left:270.5px;top:413.81px;font-size:15px;line-height:22px;color:#e3e3e3"><span style="color:#e3e3e3">$(</span><span style="color:#f6844f">"input"</span><span style="color:#e3e3e3">).</span><span style="color:#f6c23c">not</span><span style="color:#e3e3e3">(</span><span style="color:#f6844f">':disabled'</span><span style="color:#e3e3e3">).</span><span style="color:#f6c23c">each</span><span style="color:#e3e3e3">(</span><span style="color:#bd83ee">function</span></span>
<span class="m" style="right:516px;top:437.71px;font-size:15px;line-height:22px;color:#8c8c8c;letter-spacing:-0.4px">292</span>
<span class="m" style="left:306.5px;top:439.01px;font-size:15px;line-height:22px;color:#e3e3e3"><span style="color:#bd83ee">if</span><span style="color:#e3e3e3"> ($(</span><span style="color:#bd83ee">this</span><span style="color:#e3e3e3">).</span><span style="color:#f6c23c">attr</span><span style="color:#e3e3e3">(</span><span style="color:#f6844f">"name"</span><span style="color:#e3e3e3">) == undefined</span></span>
<span class="m" style="right:516px;top:462.91px;font-size:15px;line-height:22px;color:#8c8c8c;letter-spacing:-0.4px">293</span>
<span class="m" style="left:342.5px;top:464.21px;font-size:15px;line-height:22px;color:#e3e3e3"><span style="color:#bd83ee">return</span><span style="color:#e3e3e3"> </span><span style="color:#a8dab5">true</span><span style="color:#e3e3e3">;</span></span>
<span class="m" style="right:516px;top:488.11px;font-size:15px;line-height:22px;color:#8c8c8c;letter-spacing:-0.4px">294</span>
<span class="m" style="left:306.5px;top:489.41px;font-size:15px;line-height:22px;color:#e3e3e3"><span style="color:#e3e3e3">}</span></span>
<span class="m" style="right:516px;top:513.31px;font-size:15px;line-height:22px;color:#8c8c8c;letter-spacing:-0.4px">295</span>
<span class="m" style="left:306.5px;top:514.61px;font-size:15px;line-height:22px;color:#e3e3e3"><span style="color:#bd83ee">if</span><span style="color:#e3e3e3"> (i == </span><span style="color:#a8dab5">0</span><span style="color:#e3e3e3">) {</span></span>
<span class="m" style="right:516px;top:538.51px;font-size:15px;line-height:22px;color:#8c8c8c;letter-spacing:-0.4px">296</span>
<span class="m" style="left:342.5px;top:539.81px;font-size:15px;line-height:22px;color:#e3e3e3"><span style="color:#e3e3e3">reqStr += $(</span><span style="color:#bd83ee">this</span><span style="color:#e3e3e3">).</span><span style="color:#f6c23c">attr</span><span style="color:#e3e3e3">(</span><span style="color:#f6844f">"name"</span></span>
<span class="m" style="right:516px;top:563.71px;font-size:15px;line-height:22px;color:#8c8c8c;letter-spacing:-0.4px">297</span>
<span class="m" style="left:306.5px;top:565.01px;font-size:15px;line-height:22px;color:#e3e3e3"><span style="color:#e3e3e3">} </span><span style="color:#bd83ee">else</span><span style="color:#e3e3e3"> {</span></span>
</div>
<div style="left:1396px;top:84px;width:22px;height:587px;background:#2b2b2b;"></div>
<svg style="left:1399px;top:91px;" width="14" height="10" viewBox="0 0 14 10"><path d="M0 10 H14 L7 0 Z" fill="#9c9c9c"/></svg>
<svg style="left:1399px;top:655px;" width="14" height="10" viewBox="0 0 14 10"><path d="M0 0 H14 L7 10 Z" fill="#9c9c9c"/></svg>
<div style="left:1400px;top:361px;width:13px;height:25px;background:#9c9c9c;border-radius:7px;"></div>
<div style="left:825px;top:671px;width:593px;height:23px;background:#2b2b2b;"></div>
<svg style="left:831px;top:676px;" width="11" height="14" viewBox="0 0 11 14"><path d="M11 0 V14 L0 7 Z" fill="#9c9c9c"/></svg>
<svg style="left:1378px;top:676px;" width="11" height="14" viewBox="0 0 11 14"><path d="M0 0 V14 L11 7 Z" fill="#9c9c9c"/></svg>
<div style="left:852px;top:676px;width:133px;height:13px;background:#9c9c9c;border-radius:7px;"></div>
<div style="left:825px;top:694px;width:593px;height:1px;background:#5a5a5a;"></div>
<div style="left:825px;top:695px;width:593px;height:39px;background:#3c3c3c;"></div>
<span style="left:837px;top:698.72px;font-size:21px;line-height:32px;color:#e3e3e3;letter-spacing:1.375px;">{ }</span>
<span style="left:878px;top:701.42px;font-size:19px;line-height:28px;color:#e3e3e3;letter-spacing:-0.044px;">Line 289, Column 34</span>
<span style="left:1275.5px;top:701.42px;font-size:19px;line-height:28px;color:#a8c7fa;letter-spacing:-0.566px;">Coverage: n/a</span>
<div style="left:1446px;top:91px;width:246px;height:35px;background:#5a4400;border-radius:18px;"></div>
<svg style="left:1461px;top:98px;" width="21" height="21" viewBox="0 0 21 21"><circle cx="10.5" cy="10.5" r="8.6" fill="none" stroke="#f7e08c" stroke-width="1.9"/><path d="M10.5 9.3 V15" stroke="#f7e08c" stroke-width="2"/><circle cx="10.5" cy="6.3" r="1.2" fill="#f7e08c"/></svg>
<span style="left:1488.5px;top:94.92px;font-size:19px;line-height:28px;color:#f7e08c;letter-spacing:0.181px;">Paused on breakpoint</span>
<div style="left:1419px;top:135px;width:300px;height:66px;background:#2f2f2f;"></div>
<svg style="left:1435px;top:145.5px;" width="7" height="12" viewBox="0 0 7 12"><path d="M0 0 V12 L7 6 Z" fill="#c7c7c7"/></svg>
<span style="left:1451px;top:137.92px;font-size:19px;line-height:28px;color:#e3e3e3;letter-spacing:-0.028px;">Watch</span>
<svg style="left:1432px;top:182px;" width="12" height="7" viewBox="0 0 12 7"><path d="M0 0 H12 L6 7 Z" fill="#c7c7c7"/></svg>
<span style="left:1451px;top:171.22px;font-size:19px;line-height:28px;color:#e3e3e3;letter-spacing:0.06px;">Breakpoints</span>
<div style="left:1419px;top:200px;width:300px;height:1px;background:#4a4a4a;"></div>
<svg style="left:1428px;top:210px;" width="18" height="18" viewBox="0 0 18 18"><rect width="18" height="18" rx="2.5" fill="#7cacf8"/><path d="M3.8 9.5 L7.5 13.2 L14.5 5.2" fill="none" stroke="#0b2a5a" stroke-width="2.3"/></svg>
<span style="left:1455.5px;top:204.92px;font-size:19px;line-height:28px;color:#e3e3e3;letter-spacing:0.059px;">Pause on uncaught exceptions</span>
<svg style="left:1428px;top:237px;" width="18" height="18" viewBox="0 0 18 18"><rect x=".8" y=".8" width="16.4" height="16.4" rx="2.5" fill="#3c3c3c" stroke="#757575" stroke-width="1.6"/></svg>
<span style="left:1455.5px;top:231.72px;font-size:19px;line-height:28px;color:#e3e3e3;letter-spacing:0.01px;">Pause on caught exceptions</span>
<div style="left:1419px;top:264px;width:300px;height:1px;background:#4a4a4a;"></div>
<svg style="left:1432px;top:281.5px;" width="12" height="7" viewBox="0 0 12 7"><path d="M0 0 H12 L6 7 Z" fill="#c7c7c7"/></svg>
<svg style="left:1451px;top:274px;" width="20" height="19" viewBox="0 0 20 19"><rect x="1.1" y="1.1" width="17.8" height="16.8" rx="2.5" fill="none" stroke="#f28b54" stroke-width="2.1"/><path d="M7.5 6.5 L4.8 9.5 L7.5 12.5 M12.5 6.5 L15.2 9.5 L12.5 12.5" fill="none" stroke="#f28b54" stroke-width="1.8"/></svg>
<span style="left:1479.5px;top:270.62px;font-size:19px;line-height:28px;color:#e3e3e3;letter-spacing:-0.108px;">index.js?v=1746602356...</span>
<div style="left:1419px;top:298px;width:300px;height:29.5px;background:#5c4400;"></div>
<svg style="left:1449px;top:304px;" width="18" height="18" viewBox="0 0 18 18"><rect width="18" height="18" rx="2.5" fill="#7cacf8"/><path d="M3.8 9.5 L7.5 13.2 L14.5 5.2" fill="none" stroke="#0b2a5a" stroke-width="2.3"/></svg>
<span style="left:1476.5px;top:304.01px;font-size:15px;line-height:22px;color:#a09880;font-family:'Liberation Mono','Noto Serif CJK SC',monospace;letter-spacing:-0.2px;">var reqStr = "";</span>
<span style="left:1675.5px;top:299.02px;font-size:19px;line-height:28px;color:#f7e08c;letter-spacing:-0.234px;">289</span>
<div style="left:1419px;top:329px;width:300px;height:34px;background:#2f2f2f;"></div>
<svg style="left:1432px;top:345px;" width="12" height="7" viewBox="0 0 12 7"><path d="M0 0 H12 L6 7 Z" fill="#c7c7c7"/></svg>
<span style="left:1451px;top:333.62px;font-size:19px;line-height:28px;color:#e3e3e3;letter-spacing:-0.375px;">Scope</span>
<div style="left:1419px;top:363px;width:300px;height:1px;background:#4a4a4a;"></div>
<div style="left:1419px;top:364px;width:299px;height:370px;overflow:hidden;">
<svg style="left:15px;top:13px" width="12" height="7" viewBox="0 0 12 7"><path d="M0 0 H12 L6 7 Z" fill="#c7c7c7"/></svg>
<span class="m" style="left:33px;top:6.31px;font-size:15px;line-height:22px;color:#e3e3e3;">Local</span>
<svg style="left:30px;top:37.0px" width="7" height="11" viewBox="0 0 7 11"><path d="M0 0 V11 L7 5.5 Z" fill="#c7c7c7"/></svg>
<span class="m" style="left:45.299999999999955px;top:32.51px;font-size:15px;line-height:22px;color:#e3e3e3;"><span style="color:#9a9a9a">this</span>: Object</span>
<svg style="left:30px;top:61.0px" width="7" height="11" viewBox="0 0 7 11"><path d="M0 0 V11 L7 5.5 Z" fill="#c7c7c7"/></svg>
<span class="m" style="left:45.299999999999955px;top:56.51px;font-size:15px;line-height:22px;color:#e3e3e3;"><b style="color:#7cacf8;letter-spacing:.3px">Hlclient</b>: <i style="color:#f28b54">ƒ</i> <i>(wsURL)</i></span>
<svg style="left:30px;top:85.0px" width="7" height="11" viewBox="0 0 7 11"><path d="M0 0 V11 L7 5.5 Z" fill="#c7c7c7"/></svg>
<span class="m" style="left:45.299999999999955px;top:80.51px;font-size:15px;line-height:22px;color:#e3e3e3;"><b style="color:#7cacf8;letter-spacing:.3px">arguments</b>: <span style="color:#9a9a9a">Arguments(3) </span> ['<span style="color:#5cd5fb">10001', '9594</span></span>
<span class="m" style="left:45.299999999999955px;top:104.51px;font-size:15px;line-height:22px;color:#e3e3e3;"><b style="color:#7cacf8;letter-spacing:.3px">data</b>: <span style="color:#5cd5fb">"10001,9594cf81071b0b7e0b20d49c0493</span></span>
<svg style="left:30px;top:133.0px" width="7" height="11" viewBox="0 0 7 11"><path d="M0 0 V11 L7 5.5 Z" fill="#c7c7c7"/></svg>
<span class="m" style="left:45.299999999999955px;top:128.51px;font-size:15px;line-height:22px;color:#e3e3e3;"><b style="color:#7cacf8;letter-spacing:.3px">demo</b>: <span style="color:#9a9a9a">Hlclient </span> {wsURL: <span style="color:#5cd5fb">'ws://127.0.0.1</span></span>
<svg style="left:30px;top:157.0px" width="7" height="11" viewBox="0 0 7 11"><path d="M0 0 V11 L7 5.5 Z" fill="#c7c7c7"/></svg>
<span class="m" style="left:45.299999999999955px;top:152.51px;font-size:15px;line-height:22px;color:#e3e3e3;"><b style="color:#7cacf8;letter-spacing:.3px">key</b>: <span style="color:#9a9a9a">RSAKeyPair </span> {e: BigInt, d: BigInt</span>
<span class="m" style="left:45.299999999999955px;top:176.51px;font-size:15px;line-height:22px;color:#e3e3e3;"><b style="color:#7cacf8;letter-spacing:.3px">modulus</b>: <span style="color:#5cd5fb">"9594cf81071b0b7e0b20d49c0493</span></span>
<span class="m" style="left:45.299999999999955px;top:200.51px;font-size:15px;line-height:22px;color:#e3e3e3;"><b style="color:#7cacf8;letter-spacing:.3px">publicExponent</b>: <span style="color:#5cd5fb">"10001"</span></span>
<span class="m" style="left:45.299999999999955px;top:224.51px;font-size:15px;line-height:22px;color:#e3e3e3;"><b style="color:#7cacf8;letter-spacing:.3px">reqStr</b>: <span style="color:#9a9a9a">undefined</span></span>
<svg style="left:30px;top:253.0px" width="7" height="11" viewBox="0 0 7 11"><path d="M0 0 V11 L7 5.5 Z" fill="#c7c7c7"/></svg>
<span class="m" style="left:45.299999999999955px;top:248.51px;font-size:15px;line-height:22px;color:#e3e3e3;"><b style="color:#7cacf8;letter-spacing:.3px">result</b>: <span style="color:#9a9a9a">(3) </span> ['<span style="color:#5cd5fb">10001'</span>, '<span style="color:#5cd5fb">9594cf81071b</span></span>
<span class="m" style="left:45.299999999999955px;top:272.51px;font-size:15px;line-height:22px;color:#e3e3e3;"><b style="color:#7cacf8;letter-spacing:.3px">rpc_client_id</b>: <span style="color:#9a9a9a">undefined</span></span>
<svg style="left:18px;top:302.1px" width="7" height="11" viewBox="0 0 7 11"><path d="M0 0 V11 L7 5.5 Z" fill="#c7c7c7"/></svg>
<svg style="left:18px;top:329.1px" width="7" height="11" viewBox="0 0 7 11"><path d="M0 0 V11 L7 5.5 Z" fill="#c7c7c7"/></svg>
<svg style="left:18px;top:356.1px" width="7" height="11" viewBox="0 0 7 11"><path d="M0 0 V11 L7 5.5 Z" fill="#c7c7c7"/></svg>
<span class="m" style="left:33px;top:297.61px;font-size:15px;line-height:22px;color:#e3e3e3;">Closure</span>
<span class="m" style="left:33px;top:324.61px;font-size:15px;line-height:22px;color:#e3e3e3;">Closure</span>
<span class="m" style="left:33px;top:351.61px;font-size:15px;line-height:22px;color:#e3e3e3;">Global</span>
<span class="m" style="left:240px;top:351.61px;font-size:15px;line-height:22px;color:#e3e3e3;">Window</span>
</div>
<div style="left:1720px;top:84px;width:20px;height:650px;background:#2b2b2b;"></div>
<svg style="left:1724px;top:89px;" width="13" height="10" viewBox="0 0 13 10"><path d="M0 10 H13 L6.5 0 Z" fill="#9c9c9c"/></svg>
<svg style="left:1724px;top:719px;" width="13" height="10" viewBox="0 0 13 10"><path d="M0 0 H13 L6.5 10 Z" fill="#9c9c9c"/></svg>
<div style="left:1724px;top:109px;width:13px;height:293px;background:#9c9c9c;border-radius:7px;"></div>
<div style="left:1614px;top:163px;width:72px;height:72px;border-radius:50%;background:conic-gradient(from 0deg,#8ccbe8 0deg,#b8b0ec 50deg,#e6a3d8 100deg,#f0a0cc 150deg,#dfa6de 190deg,#b9b0ec 230deg,#86d0e6 280deg,#80d2e6 330deg,#8ccbe8 360deg);-webkit-mask:radial-gradient(circle,transparent 30px,#000 30.8px);mask:radial-gradient(circle,transparent 30px,#000 30.8px);"></div>
<div style="left:1619.5px;top:168.5px;width:61px;height:61px;border-radius:50%;background:rgba(150,150,150,.62);"></div>
<svg style="left:1626px;top:175px;" width="48" height="48" viewBox="0 0 48 48"><g fill="none" stroke="#050505" stroke-width="5.6" stroke-linecap="round" stroke-linejoin="round"><path d="M9 10.5 L19.5 16"/><path d="M38 10.5 L22.5 19"/><path d="M5.5 19.5 L17.5 26 Q19.5 27.5 19.3 30"/><path d="M17.3 35 V41"/><path d="M43 19 L35.5 23.5"/><path d="M30 27 Q29 28 29 30 V41.5"/><path d="M17.3 41 L23 44.5 L29 41.5" stroke-width="5"/></g></svg>
<div style="left:555px;top:734px;width:1185px;height:1px;background:#5a5a5a;"></div>
<div style="left:555px;top:735px;width:1185px;height:40px;background:#3c3c3c;"></div>
<div style="left:555px;top:775px;width:1185px;height:1px;background:#5a5a5a;"></div>
<div style="left:555px;top:776px;width:1185px;height:39px;background:#3c3c3c;"></div>
<div style="left:555px;top:815px;width:1185px;height:1px;background:#5a5a5a;"></div>
<div style="left:576.1999999999999px;top:746.0px;width:4.2px;height:4.2px;border-radius:50%;background:#c7c7c7"></div>
<div style="left:576.1999999999999px;top:752.5px;width:4.2px;height:4.2px;border-radius:50%;background:#c7c7c7"></div>
<div style="left:576.1999999999999px;top:759.0px;width:4.2px;height:4.2px;border-radius:50%;background:#c7c7c7"></div>
<span style="left:611.5px;top:741.72px;font-size:19px;line-height:28px;color:#a8c7fa;letter-spacing:0.04px;">Console</span>
<div style="left:597px;top:772px;width:101px;height:3px;background:#a8c7fa;border-radius:3px 3px 0 0;"></div>
<span style="left:713px;top:741.72px;font-size:19px;line-height:28px;color:#e3e3e3;letter-spacing:-0.269px;">AI assistance</span>
<svg style="left:829px;top:745px;" width="17" height="19" viewBox="0 0 17 19"><path d="M5.5 1.5 H11.5 M6.8 1.5 V7 L1.8 16 a1 1 0 0 0 .9 1.5 H14.3 a1 1 0 0 0 .9 -1.5 L10.2 7 V1.5" fill="none" stroke="#c7c7c7" stroke-width="1.7" stroke-linejoin="round"/></svg>
<span style="left:896px;top:741.72px;font-size:19px;line-height:28px;color:#e3e3e3;letter-spacing:0.089px;">What's new</span>
<span style="left:1041.3px;top:741.72px;font-size:19px;line-height:28px;color:#e3e3e3;letter-spacing:-0.584px;">Search</span>
<svg style="left:1711px;top:748px;" width="14" height="14" viewBox="0 0 14 14"><path d="M1 1 L13 13 M13 1 L1 13" stroke="#d0d0d0" stroke-width="2.2"/></svg>
<svg style="left:568px;top:784px;" width="22" height="22" viewBox="0 0 22 22"><rect x="1.2" y="1.2" width="19.6" height="19.6" rx="2" fill="none" stroke="#c7c7c7" stroke-width="2.2"/><path d="M7.5 1 V21" stroke="#c7c7c7" stroke-width="2.2"/><path d="M15.5 6.5 L10.5 11 L15.5 15.5 Z" fill="#c7c7c7"/></svg>
<svg style="left:609px;top:783px;" width="24" height="24" viewBox="0 0 24 24"><circle cx="12" cy="12" r="10" fill="none" stroke="#c7c7c7" stroke-width="2.1"/><path d="M5 19 L19 5" stroke="#c7c7c7" stroke-width="2.1"/></svg>
<div style="left:648.5px;top:783px;width:2px;height:24px;background:#646464;"></div>
<span style="left:668px;top:782.42px;font-size:19px;line-height:28px;color:#e3e3e3;letter-spacing:0.526px;">top</span>
<svg style="left:705px;top:793px;" width="11" height="7" viewBox="0 0 11 7"><path d="M0 0 H11 L5.5 7 Z" fill="#c7c7c7"/></svg>
<div style="left:733.5px;top:783px;width:2px;height:24px;background:#646464;"></div>
<svg style="left:748px;top:785px;" width="28" height="20" viewBox="0 0 28 20"><path d="M1.5 10 C5 3.5 9.5 1.5 14 1.5 S23 3.5 26.5 10 C23 16.5 18.5 18.5 14 18.5 S5 16.5 1.5 10 Z" fill="none" stroke="#c7c7c7" stroke-width="2.1"/><circle cx="14" cy="10" r="4.3" fill="none" stroke="#c7c7c7" stroke-width="2.1"/></svg>
<div style="left:788.5px;top:783px;width:2px;height:24px;background:#646464;"></div>
<div style="left:800.5px;top:780.5px;width:595px;height:30px;background:#333333;border-radius:15px;"></div>
<svg style="left:817px;top:788px;" width="16" height="15" viewBox="0 0 16 15"><path d="M1 1 H15 L9.6 8 V14 H6.4 V8 Z" fill="none" stroke="#c7c7c7" stroke-width="1.9" stroke-linejoin="round"/></svg>
<span style="left:843px;top:782.42px;font-size:19px;line-height:28px;color:#c7c7c7;letter-spacing:0.044px;">Filter</span>
<div style="left:1404.5px;top:780.5px;width:152px;height:30px;background:#353535;border-radius:6px;"></div>
<span style="left:1413.5px;top:782.42px;font-size:19px;line-height:28px;color:#858585;letter-spacing:0.031px;">Default levels</span>
<svg style="left:1537px;top:793px;" width="11" height="7" viewBox="0 0 11 7"><path d="M0 0 H11 L5.5 7 Z" fill="#858585"/></svg>
<div style="left:1564.5px;top:783px;width:2px;height:24px;background:#646464;"></div>
<span style="left:1574.5px;top:782.42px;font-size:19px;line-height:28px;color:#e3e3e3;letter-spacing:-0.443px;">1 Issue:</span>
<svg style="left:1648px;top:788px;" width="15" height="15" viewBox="0 0 15 15"><path d="M0 1.5 a1.5 1.5 0 0 1 1.5 -1.5 H13.5 a1.5 1.5 0 0 1 1.5 1.5 V10 a1.5 1.5 0 0 1 -1.5 1.5 H3.3 L0 15 Z" fill="#7cacf8"/><path d="M2.8 3.6 H12.2 M2.8 6 H12.2 M2.8 8.4 H9.5" stroke="#3c3c3c" stroke-width="1.2"/></svg>
<span style="left:1668px;top:782.42px;font-size:19px;line-height:28px;color:#e3e3e3;">1</span>
<div style="left:1686.5px;top:783px;width:2px;height:24px;background:#646464;"></div>
<svg style="left:1702px;top:783px;" width="24" height="24" viewBox="0 0 24 24"><path fill="none" stroke="#c7c7c7" stroke-width="2" stroke-linejoin="round" d="M9.7 2 h4.6 l.6 3 a7.5 7.5 0 0 1 1.9 1.1 l2.9 -1 2.3 4 -2.3 2 a7.5 7.5 0 0 1 0 2.2 l2.3 2 -2.3 4 -2.9 -1 a7.5 7.5 0 0 1 -1.9 1.1 l-.6 3 h-4.6 l-.6 -3 a7.5 7.5 0 0 1 -1.9 -1.1 l-2.9 1 -2.3 -4 2.3 -2 a7.5 7.5 0 0 1 0 -2.2 l-2.3 -2 2.3 -4 2.9 1 a7.5 7.5 0 0 1 1.9 -1.1 z"/><circle cx="12" cy="12.2" r="3.3" fill="#c7c7c7"/></svg>
<div style="left:555px;top:825px;width:181px;height:33px;background:#3d3d3d;border-radius:0 17px 17px 0;"></div>
<svg style="left:578px;top:835.9px;" width="7" height="12" viewBox="0 0 7 12"><path d="M0 0 V12 L7 6 Z" fill="#c7c7c7"/></svg>
<svg style="left:597px;top:829.9px;" width="24" height="24" viewBox="0 0 24 24"><path d="M8 5 H23 M8 12 H23 M8 19 H23" stroke="#c7c7c7" stroke-width="2.2"/><circle cx="2.5" cy="5" r="1.6" fill="#c7c7c7"/><circle cx="2.5" cy="12" r="1.6" fill="#c7c7c7"/><circle cx="2.5" cy="19" r="1.6" fill="#c7c7c7"/></svg>
<span style="left:633px;top:827.82px;font-size:19px;line-height:28px;color:#e3e3e3;letter-spacing:-0.247px;">7 messag...</span>
<svg style="left:578px;top:868.8px;" width="7" height="12" viewBox="0 0 7 12"><path d="M0 0 V12 L7 6 Z" fill="#c7c7c7"/></svg>
<svg style="left:597px;top:862.8px;" width="24" height="24" viewBox="0 0 24 24"><circle cx="12" cy="12" r="10.6" fill="none" stroke="#c7c7c7" stroke-width="2.1"/><circle cx="12" cy="9.3" r="3.4" fill="none" stroke="#c7c7c7" stroke-width="2"/><path d="M4.8 19.5 C7 15.8 10 15.3 12 15.3 S17 15.8 19.2 19.5" fill="none" stroke="#c7c7c7" stroke-width="2"/></svg>
<span style="left:633px;top:860.72px;font-size:19px;line-height:28px;color:#e3e3e3;letter-spacing:-0.159px;">6 user m...</span>
<svg style="left:597px;top:895.6999999999999px;" width="24" height="24" viewBox="0 0 24 24"><circle cx="12" cy="12" r="10.6" fill="none" stroke="#e46962" stroke-width="2.1"/><path d="M7.3 7.3 L16.7 16.7 M16.7 7.3 L7.3 16.7" stroke="#e46962" stroke-width="2.1"/></svg>
<span style="left:633px;top:893.62px;font-size:19px;line-height:28px;color:#e3e3e3;letter-spacing:0.312px;">No errors</span>
<svg style="left:596px;top:928.5999999999999px;" width="26" height="24" viewBox="0 0 26 24"><path d="M13 2.5 L24.3 22 H1.7 Z" fill="none" stroke="#f28b54" stroke-width="2.1" stroke-linejoin="round"/><path d="M13 9.5 V15.5" stroke="#f28b54" stroke-width="2.1"/><circle cx="13" cy="18.6" r="1.3" fill="#f28b54"/></svg>
<span style="left:633px;top:926.52px;font-size:19px;line-height:28px;color:#e3e3e3;letter-spacing:0.199px;">No warni...</span>
<svg style="left:578px;top:967.5px;" width="7" height="12" viewBox="0 0 7 12"><path d="M0 0 V12 L7 6 Z" fill="#c7c7c7"/></svg>
<svg style="left:597px;top:961.5px;" width="24" height="24" viewBox="0 0 24 24"><circle cx="12" cy="12" r="10.6" fill="none" stroke="#7cacf8" stroke-width="2.1"/><path d="M12 10.8 V17.5" stroke="#7cacf8" stroke-width="2.2"/><circle cx="12" cy="7.2" r="1.4" fill="#7cacf8"/></svg>
<span style="left:633px;top:959.42px;font-size:19px;line-height:28px;color:#e3e3e3;letter-spacing:0.419px;">6 info</span>
<svg style="left:578px;top:1000.4px;" width="7" height="12" viewBox="0 0 7 12"><path d="M0 0 V12 L7 6 Z" fill="#c7c7c7"/></svg>
<svg style="left:599px;top:995.4px;" width="20" height="22" viewBox="0 0 20 22"><path d="M6 5.5 a4 4 0 0 1 8 0" fill="none" stroke="#c7c7c7" stroke-width="1.9"/><rect x="4.8" y="6.5" width="10.4" height="13.5" rx="5" fill="none" stroke="#c7c7c7" stroke-width="2"/><path d="M4.5 10 L1 8 M4.5 13.5 H0.5 M4.5 17 L1 19.5 M15.5 10 L19 8 M15.5 13.5 H19.5 M15.5 17 L19 19.5 M8 11 H12 M8 15 H12 M6.5 2 L8 4 M13.5 2 L12 4" stroke="#c7c7c7" stroke-width="1.8"/></svg>
<span style="left:633px;top:992.32px;font-size:19px;line-height:28px;color:#e3e3e3;letter-spacing:0.061px;">1 verbose</span>
<div style="left:743px;top:816px;width:1px;height:402px;background:#4a4a4a;"></div>
<div style="left:745px;top:816px;width:975px;height:402px;overflow:hidden;">
<div style="left:5px;top:-10px;width:963px;height:25px;background:#413c26;border-radius:6px;"></div>
<span class="m" style="left:61.0px;top:-8.99px;font-size:15px;line-height:26px;color:#e3e3e3;"><span style="color:#fe8d59">his)"</span><span style="color:#7cacf8"> onblur=</span><span style="color:#fe8d59">"checkString(this)"</span><span style="color:#7cacf8">&gt;</span></span>
<span class="m" style="left:41.5px;top:21.21px;font-size:15px;line-height:26px;color:#e3e3e3;">[Scanner] <span class="c">开始扫描</span>...</span>
<span class="m" style="right:49.5px;top:22.81px;font-size:15px;line-height:26px;color:#c3d6f8;text-decoration:underline;">logger.js:8</span>
<span class="m" style="left:41.5px;top:53.51px;font-size:15px;line-height:26px;color:#e3e3e3;">[Scanner] <span class="c">扫描当前页面</span>...</span>
<span class="m" style="right:49.5px;top:55.11px;font-size:15px;line-height:26px;color:#c3d6f8;text-decoration:underline;">logger.js:8</span>
<span class="m" style="left:41.5px;top:85.41px;font-size:15px;line-height:26px;color:#e3e3e3;">[Scanner] <span class="c">扫描其他资源</span>...</span>
<span class="m" style="right:49.5px;top:87.01px;font-size:15px;line-height:26px;color:#c3d6f8;text-decoration:underline;">logger.js:8</span>
<span class="m" style="left:41.5px;top:118.81px;font-size:15px;line-height:26px;color:#e3e3e3;">begin of connect to wsURL: ws:<span style="color:#c3d6f8;text-decoration:underline;">//127.0.0.1:12080</span>/ws?group=mt</span>
<span class="m" style="right:49.5px;top:118.81px;font-size:15px;line-height:26px;color:#c3d6f8;text-decoration:underline;">index.js?v=1746602356744:192</span>
<div style="left:41px;top:50px;width:890px;height:1px;background:#454545"></div>
<div style="left:41px;top:82px;width:890px;height:1px;background:#454545"></div>
<div style="left:41px;top:114px;width:890px;height:1px;background:#454545"></div>
<div style="left:3px;top:147px;width:959px;height:193px;border:5px solid #f1281d;border-radius:6px;box-sizing:border-box;"></div>
<svg style="left:23px;top:159px" width="10" height="13" viewBox="0 0 10 13"><path d="M1.5 1 L8 6.5 L1.5 12" fill="none" stroke="#c7c7c7" stroke-width="1.8"/></svg>
<span class="m" style="left:41.5px;top:152.21px;font-size:15px;line-height:26px;color:#e3e3e3;">console.<span style="color:#f6c23c">log</span>(<span style="color:#f47c4e">"<span class="c">公钥的模数</span> (modulus):"</span>, modulus);</span>
<span class="m" style="left:113.5px;top:172.21px;font-size:15px;line-height:26px;color:#e3e3e3;">console.<span style="color:#f6c23c">log</span>(<span style="color:#f47c4e">"<span class="c">公钥的指数</span> (publicExponent):"</span>, publicExponent);</span>
<div style="left:41px;top:201px;width:890px;height:1px;background:#454545"></div>
<span class="m" style="left:41.5px;top:203.91px;font-size:15px;line-height:26px;color:#e3e3e3;"><span class="c">公钥的模数</span> (modulus):</span>
<span class="m" style="right:49.5px;top:205.21px;font-size:15px;line-height:26px;color:#c3d6f8;text-decoration:underline;">VM165:1</span>
<span class="m" style="left:41.5px;top:226.81px;font-size:15px;line-height:26px;color:#e3e3e3;">9594cf81071b0b7e0b20d49c0493ec36140a136aa881a11ad7bef37ac2a2870cd75f0a5fc456e722f4712de3ac8bfe44e48</span>
<span class="m" style="left:41.5px;top:248.41px;font-size:15px;line-height:26px;color:#e3e3e3;">b1c03080cd3460573d2bbbc19d3d98971e443e60c2a27eed7cb36e024bbedb789486bdaff184d402aa03dfac3461077ec26</span>
<span class="m" style="left:41.5px;top:269.91px;font-size:15px;line-height:26px;color:#e3e3e3;">4d9ad6a7b47e4266e6f9e6fca5f998a719a23ca2361ea8b3b0ccca2d55</span>
<div style="left:41px;top:297px;width:890px;height:1px;background:#454545"></div>
<span class="m" style="left:41.5px;top:299.91px;font-size:15px;line-height:26px;color:#e3e3e3;"><span class="c">公钥的指数</span> (publicExponent): 10001</span>
<span class="m" style="right:49.5px;top:301.21px;font-size:15px;line-height:26px;color:#c3d6f8;text-decoration:underline;">VM165:2</span>
<div style="left:41px;top:330px;width:890px;height:1px;background:#454545"></div>
<svg style="left:22px;top:340px" width="12" height="13" viewBox="0 0 12 13"><path d="M7 1 L1.5 6.5 L7 12" fill="none" stroke="#c7c7c7" stroke-width="1.8"/><circle cx="9.8" cy="6.5" r="1.4" fill="#c7c7c7"/></svg>
<span class="m" style="left:41.5px;top:335.01px;font-size:15px;line-height:26px;color:#787878;">undefined</span>
<svg style="left:18px;top:373px" width="9" height="15" viewBox="0 0 9 15"><path d="M1.5 1 L7.5 7.5 L1.5 14" fill="none" stroke="#4a80e0" stroke-width="2"/></svg>
</div>
<div style="left:1720px;top:816px;width:20px;height:402px;background:#2b2b2b;"></div>
<svg style="left:1724px;top:823px;" width="13" height="10" viewBox="0 0 13 10"><path d="M0 10 H13 L6.5 0 Z" fill="#9c9c9c"/></svg>
<div style="left:1724px;top:908px;width:13px;height:304px;background:#9c9c9c;border-radius:7px;"></div>
</div></body></html>
